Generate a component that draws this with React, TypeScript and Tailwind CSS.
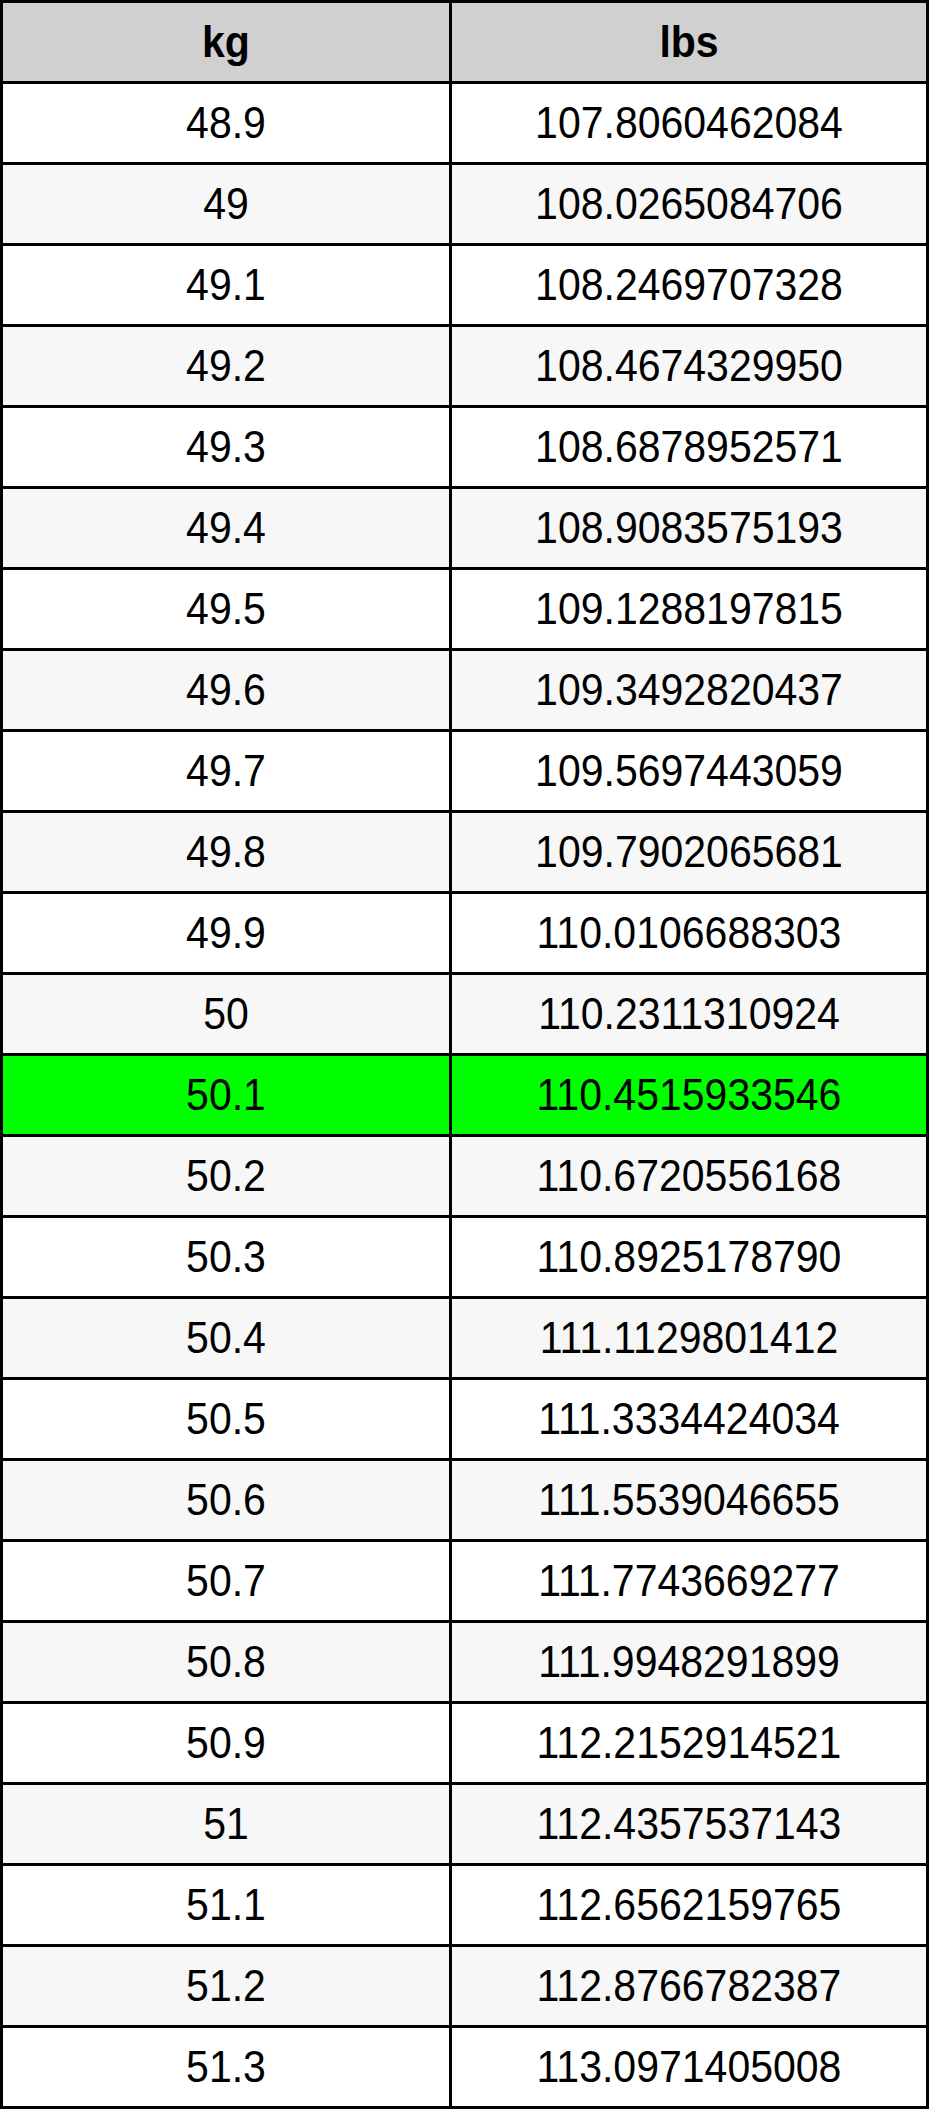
const rows: [string, string][] = [
  ["48.9", "107.8060462084"],
  ["49", "108.0265084706"],
  ["49.1", "108.2469707328"],
  ["49.2", "108.4674329950"],
  ["49.3", "108.6878952571"],
  ["49.4", "108.9083575193"],
  ["49.5", "109.1288197815"],
  ["49.6", "109.3492820437"],
  ["49.7", "109.5697443059"],
  ["49.8", "109.7902065681"],
  ["49.9", "110.0106688303"],
  ["50", "110.2311310924"],
  ["50.1", "110.4515933546"],
  ["50.2", "110.6720556168"],
  ["50.3", "110.8925178790"],
  ["50.4", "111.1129801412"],
  ["50.5", "111.3334424034"],
  ["50.6", "111.5539046655"],
  ["50.7", "111.7743669277"],
  ["50.8", "111.9948291899"],
  ["50.9", "112.2152914521"],
  ["51", "112.4357537143"],
  ["51.1", "112.6562159765"],
  ["51.2", "112.8766782387"],
  ["51.3", "113.0971405008"],
];

function Row({ a, b, bg, bold }: { a: string; b: string; bg: string; bold?: boolean }) {
  const cell = "h-[81px] flex items-center justify-center border-r-[3px] border-b-[3px] border-black " + bg;
  const txt = "inline-block scale-y-[1.07]" + (bold ? " font-bold" : "");
  return (
    <div className="flex">
      <div className={cell + " w-[449px]"}>
        <span className={txt}>{a}</span>
      </div>
      <div className={cell + " w-[477px]"}>
        <span className={txt}>{b}</span>
      </div>
    </div>
  );
}

export default function App() {
  return (
    <div className="bg-white min-h-[2115px] w-[930px]" style={{ fontFamily: '"Liberation Sans", Arial, sans-serif' }}>
      <div className="w-[929px] border-l-[3px] border-t-[3px] border-black text-[41px] text-black leading-none">
        <Row a="kg" b="lbs" bg="bg-[#d0d0d0]" bold />
        {rows.map(([a, b], i) => (
          <Row
            key={a}
            a={a}
            b={b}
            bg={a === "50.1" ? "bg-[#00ff00]" : i % 2 === 0 ? "bg-white" : "bg-[#f7f7f7]"}
          />
        ))}
      </div>
    </div>
  );
}
